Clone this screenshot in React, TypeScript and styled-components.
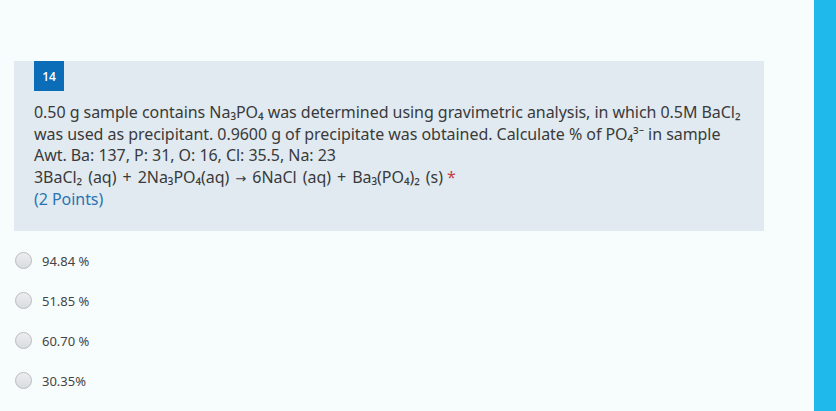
import styled, { createGlobalStyle } from 'styled-components'

const GlobalStyle = createGlobalStyle`
  html, body {
    margin: 0;
    padding: 0;
    background: #f7fdfd;
  }
  body {
    font-family: 'Noto Sans', 'Open Sans', sans-serif;
    color: #333;
  }
`

const Page = styled.div`
  display: flex;
  width: 836px;
  height: 411px;
  overflow: hidden;
`

const Main = styled.div`
  flex: 1;
  padding: 61px 0 0 14px;
`

const SideBar = styled.div`
  width: 22px;
  background-color: #1fb9ec;
`

const QuestionCard = styled.div`
  width: 750px;
  box-sizing: border-box;
  background-color: #e1eaf1;
  padding: 0 20px 20px 20px;
`

const NumberBadge = styled.div`
  display: flex;
  align-items: center;
  justify-content: center;
  width: 30px;
  height: 30px;
  background-color: #0b6db7;
  color: #fff;
  font-family: 'Open Sans', sans-serif;
  font-size: 12px;
  font-weight: 600;
`

const QuestionText = styled.div`
  margin-top: 11px;
  font-size: 16px;
  line-height: 21.6px;
  color: #3a3a3a;
  letter-spacing: -0.05px;
`

const Equation = styled.div`
  word-spacing: 2px;
`

const Arrow = styled.span`
  font-family: 'DejaVu Sans', sans-serif;
  font-size: 13px;
`

const Points = styled.div`
  color: #2a74b0;
`

const Required = styled.span`
  color: #c4413f;
  margin-left: 4px;
`

const Options = styled.div`
  margin-top: 10px;
  display: flex;
  flex-direction: column;
`

const OptionRow = styled.label`
  display: flex;
  align-items: center;
  height: 40px;
  padding-left: 1px;
  font-size: 13px;
  color: #444;
`

const Radio = styled.span`
  width: 15px;
  height: 15px;
  border-radius: 50%;
  border: 1px solid #b8bcbf;
  background: linear-gradient(#eceeef, #d9dcdd);
  margin-right: 10px;
`

const options = ['94.84 %', '51.85 %', '60.70 %', '30.35%']

export default function App() {
  return (
    <>
      <GlobalStyle />
      <Page>
        <Main>
          <QuestionCard>
            <NumberBadge>14</NumberBadge>
            <QuestionText>
              <div>
                0.50 g sample contains Na₃PO₄ was determined using gravimetric analysis, in which 0.5M BaCl₂
              </div>
              <div>
                was used as precipitant. 0.9600 g of precipitate was obtained. Calculate % of PO₄³⁻ in sample
              </div>
              <div>Awt. Ba: 137, P: 31, O: 16, Cl: 35.5, Na: 23</div>
              <Equation>
                3BaCl₂ (aq) + 2Na₃PO₄(aq) <Arrow>→</Arrow> 6NaCl (aq) + Ba₃(PO₄)₂ (s)
                <Required>*</Required>
              </Equation>
              <Points>(2 Points)</Points>
            </QuestionText>
          </QuestionCard>
          <Options>
            {options.map((o) => (
              <OptionRow key={o}>
                <Radio />
                {o}
              </OptionRow>
            ))}
          </Options>
        </Main>
        <SideBar />
      </Page>
    </>
  )
}
